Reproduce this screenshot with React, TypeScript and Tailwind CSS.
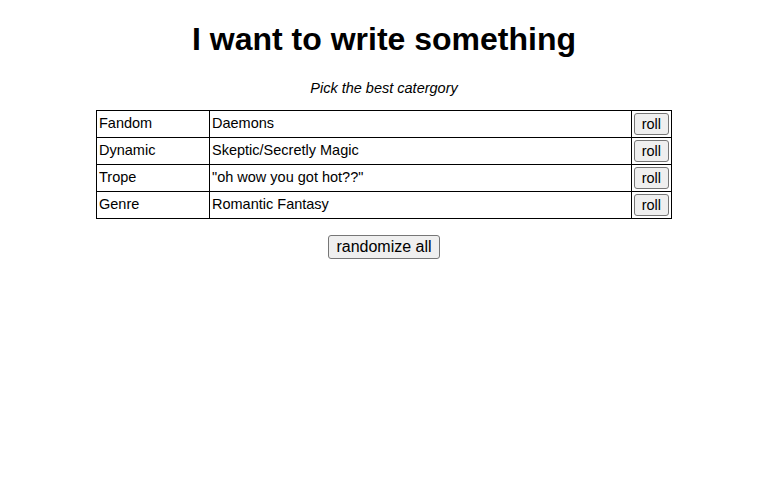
import React, { useState } from 'react';

const options: Record<string, string[]> = {
  Fandom: ['Daemons', 'Vampires', 'Fae', 'Pirates'],
  Dynamic: ['Skeptic/Secretly Magic', 'Enemies to Lovers', 'Grumpy/Sunshine'],
  Trope: ['"oh wow you got hot??"', 'Fake Dating', 'Only One Bed'],
  Genre: ['Romantic Fantasy', 'Space Opera', 'Cozy Mystery'],
};

const pick = (list: string[]) => list[Math.floor(Math.random() * list.length)];

const btn =
  'bg-[#efefef] border border-[#767676] rounded-[3px] px-[7px] py-0 leading-[normal] text-black hover:bg-[#e5e5e5]';

const cell = 'border border-black h-[27px] px-[2px] py-0 align-middle';

export default function App() {
  const [values, setValues] = useState<Record<string, string>>({
    Fandom: 'Daemons',
    Dynamic: 'Skeptic/Secretly Magic',
    Trope: '"oh wow you got hot??"',
    Genre: 'Romantic Fantasy',
  });

  const roll = (key: string) => setValues((v) => ({ ...v, [key]: pick(options[key]) }));

  const rollAll = () => {
    const next: Record<string, string> = {};
    Object.keys(options).forEach((k) => (next[k] = pick(options[k])));
    setValues(next);
  };

  return (
    <div className="min-h-screen bg-white text-black font-['Liberation_Sans',Arial,sans-serif] text-center">
      <h1 className="text-[32px] font-bold my-[21.44px] leading-[normal]">I want to write something</h1>
      <p className="italic text-[14.5px] mt-[16px] mb-[14px] leading-[normal]">Pick the best catergory</p>

      <table className="w-[576px] mx-auto border-collapse border border-black text-left text-[14.5px]">
        <tbody>
          {Object.keys(values).map((key) => (
            <tr key={key}>
              <td className={`${cell} w-[113px]`}>{key}</td>
              <td className={cell}>{values[key]}</td>
              <td className={`${cell} w-[40px]`}>
                <button className={`${btn} block h-[22px] text-[14.5px]`} onClick={() => roll(key)}>
                  roll
                </button>
              </td>
            </tr>
          ))}
        </tbody>
      </table>

      <button className={`${btn} h-[24px] text-[16px] mt-[16px]`} onClick={rollAll}>
        randomize all
      </button>
    </div>
  );
}
